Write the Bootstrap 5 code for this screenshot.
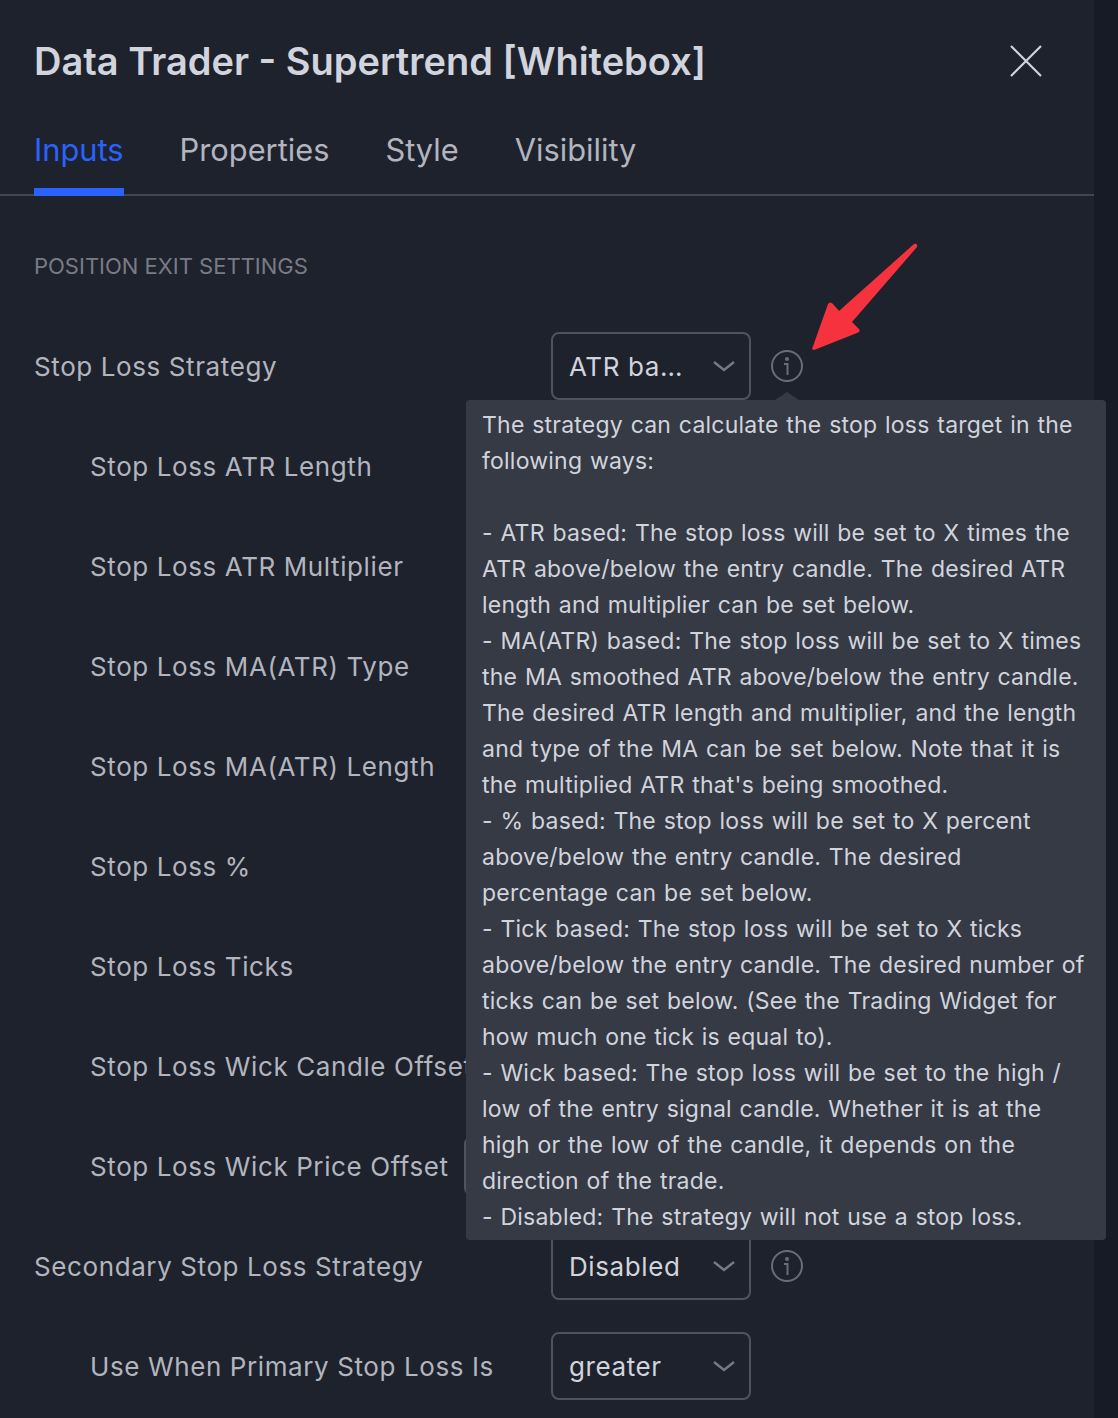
<!DOCTYPE html>
<html lang="en">
<head>
    <meta charset="UTF-8">
    <meta name="viewport" content="width=device-width, initial-scale=1.0">
    <title>Data Trader - Supertrend [Whitebox]</title>
    <link rel="stylesheet" href="https://cdn.jsdelivr.net/npm/bootstrap@5.3.0/dist/css/bootstrap.min.css">
    <style>
        html, body {
            height: 1418px;
            overflow: hidden;
        }
        body {
            background-color: #171b26;
            font-family: Inter, "Liberation Sans", sans-serif;
        }
        .dialog-box {
            position: relative;
            width: 1094px;
            height: 1418px;
            background: #1e222d;
            overflow: hidden;
        }
        .dialog-head {
            height: 121px;
            padding: 0 51px 0 34px;
        }
        .dialog-title {
            font-size: 38px;
            font-weight: 600;
            line-height: 1;
            margin: 0;
            color: #d1d4dc;
        }
        .tab-bar {
            height: 75px;
            padding-left: 34px;
            gap: 56px;
            border-bottom: 2px solid #434651;
        }
        .tab-bar .nav-link {
            padding: 6px 0 0;
            height: 75px;
            font-size: 30.8px;
            color: #b2b5be;
        }
        .tab-bar .nav-link.active {
            color: #2962ff;
            border-bottom: 8px solid #2962ff;
        }
        .section-name {
            margin: 54px 0 0 34px;
            font-size: 22px;
            line-height: 32px;
            color: #787b86;
        }
        .setting-list {
            margin-top: 50px;
            padding-left: 34px;
            gap: 32px;
        }
        .setting-row {
            height: 68px;
        }
        .setting-row.sub-row {
            padding-left: 56px;
        }
        .setting-label {
            font-size: 26px;
            letter-spacing: .6px;
            color: #b2b5be;
            white-space: nowrap;
        }
        .top-label {
            width: 517px;
        }
        .sub-label {
            width: 461px;
        }
        .pick-box {
            width: 200px;
            height: 68px;
            padding: 0 13px 0 16px;
            border: 2px solid #50535e;
            border-radius: 8px;
            font-size: 26px;
            letter-spacing: .6px;
            color: #d1d4dc;
        }
        .num-box {
            width: 200px;
            height: 60px;
            margin-left: -87px;
            border: 2px solid #50535e;
            border-radius: 8px;
        }
        .tip-dot {
            margin-left: 20px;
        }
        .close-x {
            background: none;
            border: 0;
            padding: 0;
            line-height: 0;
        }
        .help-pop {
            position: absolute;
            left: 466px;
            top: 400px;
            width: 640px;
            height: 840px;
            padding: 7px 16px;
            background: #363a45;
            border-radius: 4px;
            font-size: 23px;
            letter-spacing: .22px;
            word-spacing: 1px;
            line-height: 36px;
            color: #d1d4dc;
            white-space: pre;
        }
        .help-pop::before {
            content: "";
            position: absolute;
            left: 309px;
            top: -8px;
            border-left: 12px solid transparent;
            border-right: 12px solid transparent;
            border-bottom: 8px solid #363a45;
        }
        .red-arrow {
            position: absolute;
            left: 800px;
            top: 236px;
        }
    </style>
</head>
<body>

    <div class="d-flex">
        <div class="dialog-box">

            <!-- header -->
            <div class="dialog-head d-flex align-items-center justify-content-between">
                <h1 class="dialog-title">Data Trader - Supertrend [Whitebox]</h1>
                <button class="close-x" type="button" aria-label="Close">
                    <svg width="34" height="34" viewBox="0 0 34 34"><path d="M2 2 32 32M32 2 2 32" stroke="#d1d4dc" stroke-width="2.2" fill="none"/></svg>
                </button>
            </div>

            <!-- tabs -->
            <ul class="nav tab-bar">
                <li class="nav-item"><a class="nav-link active" href="#">Inputs</a></li>
                <li class="nav-item"><a class="nav-link" href="#">Properties</a></li>
                <li class="nav-item"><a class="nav-link" href="#">Style</a></li>
                <li class="nav-item"><a class="nav-link" href="#">Visibility</a></li>
            </ul>

            <div class="section-name">POSITION EXIT SETTINGS</div>

            <!-- settings -->
            <div class="setting-list d-flex flex-column">
                <div class="setting-row d-flex align-items-center">
                    <div class="setting-label top-label">Stop Loss Strategy</div>
                    <div class="pick-box d-flex align-items-center justify-content-between">
                        <span>ATR ba…</span>
                        <svg width="24" height="14" viewBox="0 0 24 14"><path d="M2 3 12 11 22 3" stroke="#787b86" stroke-width="2.4" fill="none"/></svg>
                    </div>
                    <svg class="tip-dot" width="32" height="32" viewBox="0 0 32 32"><circle cx="16" cy="16" r="15" stroke="#6a6d78" stroke-width="2" fill="none"/><circle cx="16" cy="9" r="2" fill="#6a6d78"/><path d="M13 14H16.5V25" stroke="#6a6d78" stroke-width="2" fill="none"/></svg>
                </div>
                <div class="setting-row sub-row d-flex align-items-center"><div class="setting-label sub-label">Stop Loss ATR Length</div></div>
                <div class="setting-row sub-row d-flex align-items-center"><div class="setting-label sub-label">Stop Loss ATR Multiplier</div></div>
                <div class="setting-row sub-row d-flex align-items-center"><div class="setting-label sub-label">Stop Loss MA(ATR) Type</div></div>
                <div class="setting-row sub-row d-flex align-items-center"><div class="setting-label sub-label">Stop Loss MA(ATR) Length</div></div>
                <div class="setting-row sub-row d-flex align-items-center"><div class="setting-label sub-label">Stop Loss %</div></div>
                <div class="setting-row sub-row d-flex align-items-center"><div class="setting-label sub-label">Stop Loss Ticks</div></div>
                <div class="setting-row sub-row d-flex align-items-center"><div class="setting-label sub-label">Stop Loss Wick Candle Offset</div></div>
                <div class="setting-row sub-row d-flex align-items-center">
                    <div class="setting-label sub-label">Stop Loss Wick Price Offset</div>
                    <div class="num-box"></div>
                </div>
                <div class="setting-row d-flex align-items-center">
                    <div class="setting-label top-label">Secondary Stop Loss Strategy</div>
                    <div class="pick-box d-flex align-items-center justify-content-between">
                        <span>Disabled</span>
                        <svg width="24" height="14" viewBox="0 0 24 14"><path d="M2 3 12 11 22 3" stroke="#787b86" stroke-width="2.4" fill="none"/></svg>
                    </div>
                    <svg class="tip-dot" width="32" height="32" viewBox="0 0 32 32"><circle cx="16" cy="16" r="15" stroke="#6a6d78" stroke-width="2" fill="none"/><circle cx="16" cy="9" r="2" fill="#6a6d78"/><path d="M13 14H16.5V25" stroke="#6a6d78" stroke-width="2" fill="none"/></svg>
                </div>
                <div class="setting-row sub-row d-flex align-items-center">
                    <div class="setting-label sub-label">Use When Primary Stop Loss Is</div>
                    <div class="pick-box d-flex align-items-center justify-content-between">
                        <span>greater</span>
                        <svg width="24" height="14" viewBox="0 0 24 14"><path d="M2 3 12 11 22 3" stroke="#787b86" stroke-width="2.4" fill="none"/></svg>
                    </div>
                </div>
            </div>

            <!-- red annotation arrow -->
            <svg class="red-arrow" width="130" height="125" viewBox="800 236 130 125"><path d="M812 349 L828 304 Q830 301 833 304 L839 311 L914 244 Q918 243 917 247 L852 322 L859 329 Q861 332 857 333 L814 350 Z" fill="#f7323f"/></svg>
        </div>
    </div>

    <!-- tooltip, hangs over the dialog edge -->
    <div class="help-pop">The strategy can calculate the stop loss target in the
following ways:

- ATR based: The stop loss will be set to X times the
ATR above/below the entry candle. The desired ATR
length and multiplier can be set below.
- MA(ATR) based: The stop loss will be set to X times
the MA smoothed ATR above/below the entry candle.
The desired ATR length and multiplier, and the length
and type of the MA can be set below. Note that it is
the multiplied ATR that's being smoothed.
- % based: The stop loss will be set to X percent
above/below the entry candle. The desired
percentage can be set below.
- Tick based: The stop loss will be set to X ticks
above/below the entry candle. The desired number of
ticks can be set below. (See the Trading Widget for
how much one tick is equal to).
- Wick based: The stop loss will be set to the high /
low of the entry signal candle. Whether it is at the
high or the low of the candle, it depends on the
direction of the trade.
- Disabled: The strategy will not use a stop loss.</div>

    <script src="https://cdn.jsdelivr.net/npm/bootstrap@5.3.0/dist/js/bootstrap.bundle.min.js"></script>
</body>
</html>
